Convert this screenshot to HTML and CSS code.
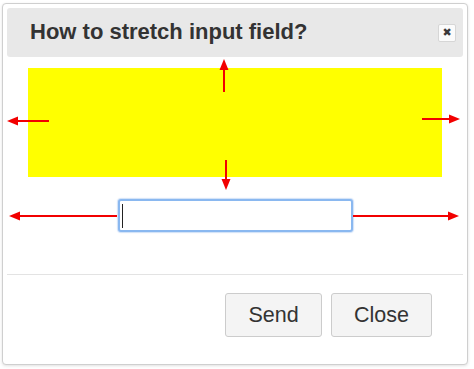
FILE: index.html
```html
<!DOCTYPE html>
<html>
<head>
<meta charset="utf-8">
<link rel="stylesheet" href="styles.css">
</head>
<body>
<div class="dialog">
  <div class="header">
    <h1 class="title">How to stretch input field?</h1>
    <button class="close-x" type="button">&#x2716;</button>
  </div>
  <div class="content">
    <div class="yellow"></div>
    <div class="field"><span class="caret"></span></div>
  </div>
  <div class="footer">
    <button class="btn" type="button">Send</button>
    <button class="btn" type="button">Close</button>
  </div>
  <svg class="arrows" width="464" height="360" viewBox="3 4 464 360" xmlns="http://www.w3.org/2000/svg">
    <g stroke="#f20000" stroke-width="2" fill="none">
      <line x1="224" y1="92" x2="224" y2="68"/>
      <line x1="226" y1="160" x2="226" y2="180"/>
      <line x1="49" y1="121" x2="16" y2="121"/>
      <line x1="422" y1="119" x2="450" y2="119"/>
      <line x1="117" y1="216" x2="18" y2="216"/>
      <line x1="353" y1="216" x2="449" y2="216"/>
    </g>
    <g fill="#f20000">
      <polygon points="224,59 219.5,70 228.5,70"/>
      <polygon points="226,190 221.5,179 230.5,179"/>
      <polygon points="7,121 18,116.5 18,125.5"/>
      <polygon points="460,119 449,114.5 449,123.5"/>
      <polygon points="9,216 20,211.5 20,220.5"/>
      <polygon points="459,216 448,211.5 448,220.5"/>
    </g>
  </svg>
</div>
</body>
</html>
```

FILE: styles.css
```css
html, body {
  margin: 0;
  padding: 0;
  background: #ffffff;
}
body {
  width: 474px;
  height: 369px;
  padding: 3px 0 0 2px;
  box-sizing: border-box;
  font-family: "Liberation Sans", Arial, sans-serif;
  color: #333333;
}
.dialog {
  position: relative;
  width: 466px;
  height: 362px;
  box-sizing: border-box;
  border: 1px solid #cfcfcf;
  border-radius: 4px;
  padding: 4px;
  background: #ffffff;
  box-shadow: 0 1px 3px rgba(0, 0, 0, 0.12);
  display: flex;
  flex-direction: column;
}
.header {
  height: 49px;
  background: #e8e8e8;
  border-radius: 3px;
  display: flex;
  align-items: center;
  justify-content: space-between;
  padding: 0 7px 0 23px;
  box-sizing: border-box;
}
.title {
  margin: 0;
  font-size: 22px;
  font-weight: bold;
  color: #333333;
  line-height: 1;
  position: relative;
  top: -1px;
}
.close-x {
  width: 18px;
  height: 18px;
  padding: 0;
  margin-top: 1px;
  border: 1px solid #d6d6d6;
  border-radius: 2px;
  background: #fbfbfb;
  color: #3a3a3a;
  font-family: "DejaVu Sans", sans-serif;
  font-size: 11px;
  line-height: 16px;
  text-align: center;
}
.content {
  height: 218px;
  border-bottom: 1px solid #e3e3e3;
  display: flex;
  flex-direction: column;
  align-items: center;
  box-sizing: border-box;
}
.yellow {
  margin-top: 11px;
  width: 414px;
  height: 109px;
  background: #ffff00;
}
.field {
  margin-top: 22px;
  width: 235px;
  height: 33px;
  box-sizing: border-box;
  border: 2px solid #8ab8f0;
  border-radius: 3px;
  background: #ffffff;
  box-shadow: 0 0 1px 1px rgba(120, 170, 235, 0.35);
  padding: 3px 0 0 2px;
}
.caret {
  display: block;
  width: 1px;
  height: 24px;
  background: #222222;
}
.footer {
  display: flex;
  justify-content: flex-end;
  gap: 9px;
  padding: 18px 31px 0 0;
}
.btn {
  height: 44px;
  padding: 1px 20px 0;
  border: 1px solid #cccccc;
  border-radius: 3px;
  background: #f4f4f4;
  color: #333333;
  font-family: "Liberation Sans", Arial, sans-serif;
  font-size: 21.5px;
}
.btn:first-child {
  width: 97px;
}
.btn:last-child {
  width: 101px;
}
.arrows {
  position: absolute;
  left: 0;
  top: 0;
  pointer-events: none;
}
```
